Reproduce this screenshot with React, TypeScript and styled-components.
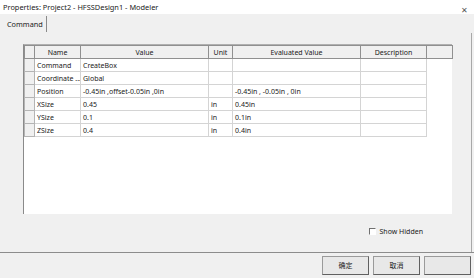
import React from 'react';
import styled, { createGlobalStyle } from 'styled-components';

const GlobalStyle = createGlobalStyle`
  html, body {
    margin: 0;
    padding: 0;
    background: #f0f0f0;
  }
  * {
    box-sizing: border-box;
  }
`;

const Window = styled.div`
  width: 474px;
  height: 278px;
  display: flex;
  flex-direction: column;
  background: #f0f0f0;
  font-family: "Noto Sans", "Noto Sans CJK SC", sans-serif;
  font-size: 7px;
  color: #1a1a1a;
  overflow: hidden;
`;

const TitleBar = styled.div`
  height: 14px;
  display: flex;
  align-items: center;
  justify-content: space-between;
  padding: 0 6px 0 3px;
  background: #ffffff;
  font-size: 7.4px;
  color: #222;
`;

const CloseGlyph = styled.span`
  font-size: 8px;
  color: #555;
  margin-top: 4px;
`;

const TabStrip = styled.div`
  height: 19px;
  display: flex;
  align-items: flex-end;
  padding-left: 4px;
`;

const Tab = styled.div`
  height: 16px;
  display: flex;
  align-items: center;
  padding: 0 3px;
  border-right: 1px solid #8a8a8a;
  font-size: 7.3px;
  margin-bottom: 1px;
`;

const TabPanel = styled.div`
  flex: 1;
  margin: 0 2px 0 3px;
  display: flex;
  flex-direction: column;
  border-right: 1px solid #a8a8a8;
  background: #f0f0f0;
  padding: 11px 19px 0 20px;
`;

const GridBox = styled.div`
  width: 429px;
  height: 170px;
  background: #ffffff;
  border-left: 1px solid #8a8a8a;
  border-top: 1px solid #b0b0b0;
`;

const Table = styled.table`
  border-collapse: collapse;
  table-layout: fixed;
  width: 428px;
`;

const HeadCell = styled.th<{ $w: number }>`
  width: ${(p) => p.$w}px;
  height: 13px;
  padding: 0;
  background: #f0f0f0;
  border: 1px solid #909090;
  font-weight: normal;
  text-align: center;
  font-size: 7px;
  line-height: 11px;
`;

const RowHead = styled.td`
  height: 13px;
  padding: 0;
  background: #f0f0f0;
  border: 1px solid #b4b4b4;
`;

const Cell = styled.td<{ $blank?: boolean }>`
  height: 13px;
  padding: 0 0 0 2px;
  border: ${(p) => (p.$blank ? 'none' : '1px solid #d4d4d4')};
  white-space: nowrap;
  overflow: hidden;
  font-size: 7px;
  line-height: 11px;
`;

const ShowHiddenRow = styled.div`
  display: flex;
  justify-content: flex-end;
  align-items: center;
  gap: 4px;
  height: 14px;
  margin-top: 10px;
  padding-right: 29px;
  font-size: 7px;
`;

const CheckBox = styled.span`
  width: 7px;
  height: 7px;
  border-left: 1px solid #707070;
  border-top: 1px solid #707070;
  border-right: 1px solid #ffffff;
  border-bottom: 1px solid #ffffff;
  background: #fff;
`;

const Footer = styled.div`
  height: 26px;
  border-top: 1px solid #8c8c8c;
  display: flex;
  justify-content: flex-end;
  align-items: center;
  gap: 4px;
  padding: 0 3px 1px 0;
`;

const DialogButton = styled.button<{ $w: number }>`
  width: ${(p) => p.$w}px;
  height: 19px;
  padding: 0;
  background: #e8e8e8;
  border: 1px solid #9a9a9a;
  border-right-color: #606060;
  border-bottom-color: #606060;
  font-family: "Noto Sans CJK SC", sans-serif;
  font-size: 7px;
  color: #222;
`;

const columns = [
  { label: '', w: 10 },
  { label: 'Name', w: 46 },
  { label: 'Value', w: 128 },
  { label: 'Unit', w: 24 },
  { label: 'Evaluated Value', w: 128 },
  { label: 'Description', w: 66 },
  { label: '', w: 26 },
];

const rows = [
  ['Command', 'CreateBox', '', ''],
  ['Coordinate ...', 'Global', '', ''],
  ['Position', '-0.45in ,offset-0.05in ,0in', '', '-0.45in , -0.05in , 0in'],
  ['XSize', '0.45', 'in', '0.45in'],
  ['YSize', '0.1', 'in', '0.1in'],
  ['ZSize', '0.4', 'in', '0.4in'],
];

const App = () => {
  return (
    <Window>
      <GlobalStyle />
      <TitleBar>
        <span>Properties: Project2 - HFSSDesign1 - Modeler</span>
        <CloseGlyph>✕</CloseGlyph>
      </TitleBar>
      <TabStrip>
        <Tab>Command</Tab>
      </TabStrip>
      <TabPanel>
        <GridBox>
          <Table>
            <thead>
              <tr>
                {columns.map((c, i) => (
                  <HeadCell key={i} $w={c.w}>
                    {c.label}
                  </HeadCell>
                ))}
              </tr>
            </thead>
            <tbody>
              {rows.map((r, i) => (
                <tr key={i}>
                  <RowHead />
                  <Cell>{r[0]}</Cell>
                  <Cell>{r[1]}</Cell>
                  <Cell>{r[2]}</Cell>
                  <Cell>{r[3]}</Cell>
                  <Cell />
                  <Cell $blank />
                </tr>
              ))}
            </tbody>
          </Table>
        </GridBox>
        <ShowHiddenRow>
          <CheckBox />
          <span>Show Hidden</span>
        </ShowHiddenRow>
      </TabPanel>
      <Footer>
        <DialogButton $w={47}>确定</DialogButton>
        <DialogButton $w={47}>取消</DialogButton>
        <DialogButton $w={47}></DialogButton>
      </Footer>
    </Window>
  );
};

export default App;
